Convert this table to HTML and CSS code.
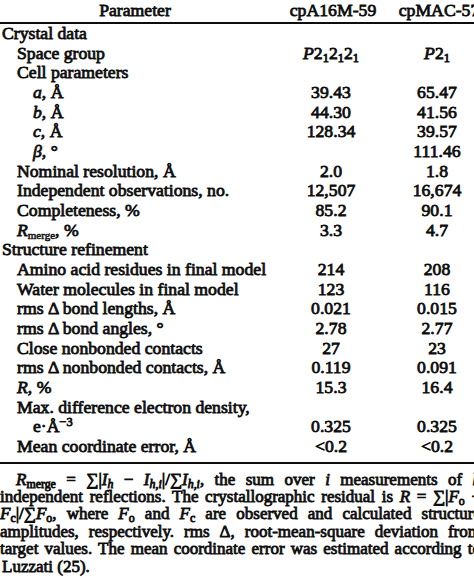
FILE: index.html
```html
<!DOCTYPE html>
<html>
<head>
<meta charset="utf-8">
<link rel="stylesheet" href="styles.css">
</head>
<body>
<div class="page">
  <table class="data">
    <colgroup>
      <col class="c-param">
      <col class="c-a">
      <col class="c-b">
    </colgroup>
    <thead>
      <tr>
        <th class="h-param">Parameter</th>
        <th class="h-a">cpA16M-59</th>
        <th class="h-b">cpMAC-57</th>
      </tr>
    </thead>
    <tbody>
      <tr><td class="l0">Crystal data</td><td></td><td></td></tr>
      <tr><td class="l1">Space group</td><td><i>P</i>2<sub>1</sub>2<sub>1</sub>2<sub>1</sub></td><td><i>P</i>2<sub>1</sub></td></tr>
      <tr><td class="l1">Cell parameters</td><td></td><td></td></tr>
      <tr><td class="l2"><i>a</i>, Å</td><td>39.43</td><td>65.47</td></tr>
      <tr><td class="l2"><i>b</i>, Å</td><td>44.30</td><td>41.56</td></tr>
      <tr><td class="l2"><i>c</i>, Å</td><td>128.34</td><td>39.57</td></tr>
      <tr><td class="l2"><i>β</i>, °</td><td></td><td>111.46</td></tr>
      <tr><td class="l1">Nominal resolution, Å</td><td>2.0</td><td>1.8</td></tr>
      <tr><td class="l1">Independent observations, no.</td><td>12,507</td><td>16,674</td></tr>
      <tr><td class="l1">Completeness, %</td><td>85.2</td><td>90.1</td></tr>
      <tr><td class="l1"><i>R</i><sub class="merge">merge</sub>, %</td><td>3.3</td><td>4.7</td></tr>
      <tr><td class="l0">Structure refinement</td><td></td><td></td></tr>
      <tr><td class="l1">Amino acid residues in final model</td><td>214</td><td>208</td></tr>
      <tr><td class="l1">Water molecules in final model</td><td>123</td><td>116</td></tr>
      <tr><td class="l1">rms Δ bond lengths, Å</td><td>0.021</td><td>0.015</td></tr>
      <tr><td class="l1">rms Δ bond angles, °</td><td>2.78</td><td>2.77</td></tr>
      <tr><td class="l1">Close nonbonded contacts</td><td>27</td><td>23</td></tr>
      <tr><td class="l1">rms Δ nonbonded contacts, Å</td><td>0.119</td><td>0.091</td></tr>
      <tr><td class="l1"><i>R</i>, %</td><td>15.3</td><td>16.4</td></tr>
      <tr><td class="l1">Max. difference electron density,</td><td></td><td></td></tr>
      <tr><td class="l2">e·Å<sup>−3</sup></td><td>0.325</td><td>0.325</td></tr>
      <tr class="last"><td class="l1">Mean coordinate error, Å</td><td>&lt;0.2</td><td>&lt;0.2</td></tr>
    </tbody>
  </table>
  <div class="notes">
    <div class="ln first"><i>R</i><sub>merge</sub> = ∑|<i>I<sub>h</sub></i> − <i>I<sub>h,i</sub></i>|/∑<i>I<sub>h,i</sub></i>, the sum over <i>i</i> measurements of <i>h</i></div>
    <div class="ln">independent reflections. The crystallographic residual is <i>R</i> = ∑|<i>F</i><sub>o</sub> −</div>
    <div class="ln"><i>F</i><sub>c</sub>|/∑<i>F</i><sub>o</sub>, where <i>F</i><sub>o</sub> and <i>F</i><sub>c</sub> are observed and calculated structure</div>
    <div class="ln">amplitudes, respectively. rms Δ, root-mean-square deviation from</div>
    <div class="ln">target values. The mean coordinate error was estimated according to</div>
    <div class="ln end">Luzzati (25).</div>
  </div>
</div>
</body>
</html>
```

FILE: styles.css
```css
html, body {
  margin: 0;
  padding: 0;
  background: #ffffff;
  overflow: hidden;
}
body {
  width: 474px;
  height: 578px;
  color: #0d0d0d;
  font-family: "Liberation Serif", "Times New Roman", serif;
  font-weight: normal;
  -webkit-text-stroke: 0.8px #0d0d0d;
}
.page {
  width: 494px;
}
.data {
  width: 494px;
  border-collapse: collapse;
  table-layout: fixed;
  font-size: 17.7px;
}
.c-param { width: 282px; }
.c-a { width: 98px; }
.c-b { width: 114px; }
.data th {
  font-weight: normal;
  text-align: center;
  line-height: 20px;
  padding: 0 0 2px 0;
  border-bottom: 2px solid #0d0d0d;
  white-space: nowrap;
}
.data th.h-param {
  padding-right: 12px;
}
.data th.h-a {
  padding-left: 4px;
}
.data th.h-b {
  padding-left: 4px;
}
.data td {
  padding: 0;
  line-height: 19.67px;
  height: 19.67px;
  white-space: nowrap;
  text-align: center;
}
.data td:first-child {
  text-align: left;
  overflow: visible;
}
.l0 { padding-left: 2px !important; }
.l1 { padding-left: 17px !important; }
.l2 { padding-left: 33px !important; }
.data sub, .data sup, .notes sub {
  font-size: 0.7em;
  line-height: 0;
}
.data sub { vertical-align: -0.25em; }
.data sup { vertical-align: 0.45em; }
.data sub.merge { font-size: 0.62em; -webkit-text-stroke: 0.5px #0d0d0d; }
.data tr.last td {
  padding-bottom: 5px;
  border-bottom: 2px solid #0d0d0d;
}
.notes {
  width: 481px;
  font-size: 17px;
  line-height: 17.35px;
  padding-top: 7px;
}
.notes .ln {
  text-align: justify;
  text-align-last: justify;
  white-space: nowrap;
}
.notes .ln.first {
  padding-left: 16px;
}
.notes .ln.end {
  text-align-last: left;
  padding-left: 2px;
}
.notes sub { vertical-align: -0.25em; }
```
